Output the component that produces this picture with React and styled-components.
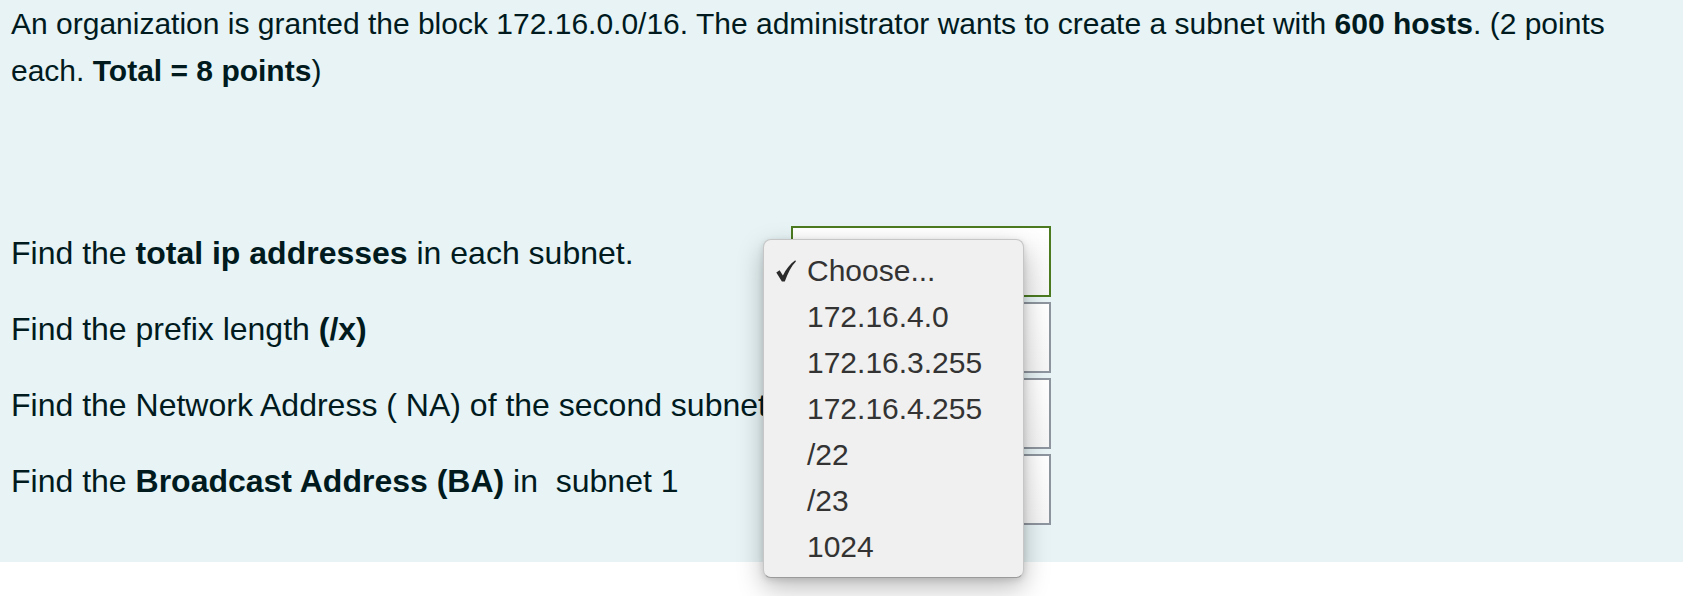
import React from "react";
import styled, { createGlobalStyle } from "styled-components";

const GlobalStyle = createGlobalStyle`
  html, body {
    margin: 0;
    padding: 0;
    background: #ffffff;
  }
  body {
    font-family: "Liberation Sans", Arial, Helvetica, sans-serif;
  }
`;

const questions = [
  {
    id: 1,
    text: (
      <>
        Find the <b>total ip addresses</b> in each subnet.
      </>
    ),
    active: true,
  },
  {
    id: 2,
    text: (
      <>
        Find the prefix length <b>(/x)</b>
      </>
    ),
  },
  {
    id: 3,
    text: <>Find the Network Address ( NA) of the second subnet</>,
  },
  {
    id: 4,
    text: (
      <>
        Find the <b>Broadcast Address (BA)</b> in{"\u00a0"} subnet 1
      </>
    ),
  },
];

const options = [
  "Choose...",
  "172.16.4.0",
  "172.16.3.255",
  "172.16.4.255",
  "/22",
  "/23",
  "1024",
];

function CheckMark() {
  return (
    <svg width="20" height="22" viewBox="0 0 20 22">
      <path
        d="M0.3 12.4 L3.6 10.2 L6.9 15.6 C9.9 9.4 14 3.8 19.3 0.3 L19.9 1.4 C15.4 6 11.8 12.8 8.8 21.5 L5.9 21.5 Z"
        fill="#2b2b2b"
      />
    </svg>
  );
}

function App() {
  return (
    <Page>
      <GlobalStyle />
      <Formulation>
        <QuestionText>
          An organization is granted the block 172.16.0.0/16. The administrator
          wants to create a subnet with <b>600 hosts</b>. (2 points each.{" "}
          <b>Total = 8 points</b>)
        </QuestionText>
        <Answers>
          {questions.map((q) => (
            <React.Fragment key={q.id}>
              <Stem>{q.text}</Stem>
              <SelectCell>
                <SelectBox $active={q.active} />
                {q.active ? (
                  <Menu>
                    {options.map((opt, i) => (
                      <MenuItem key={opt}>
                        <Tick>{i === 0 ? <CheckMark /> : null}</Tick>
                        {opt}
                      </MenuItem>
                    ))}
                  </Menu>
                ) : null}
              </SelectCell>
            </React.Fragment>
          ))}
        </Answers>
      </Formulation>
    </Page>
  );
}

const Page = styled.div`
  min-height: 596px;
  background: #ffffff;
`;

const Formulation = styled.div`
  width: 1683px;
  box-sizing: border-box;
  padding: 0 15px 37px 11px;
  background-color: #e7f3f5;
  color: #001a1e;
`;

const QuestionText = styled.p`
  margin: 0;
  font-size: 30px;
  line-height: 47px;

  b {
    font-weight: 700;
  }
`;

const Answers = styled.div`
  display: grid;
  grid-template-columns: 780px 260px;
  row-gap: 5px;
  margin-top: 132px;
`;

const Stem = styled.div`
  padding-top: 11px;
  font-size: 32px;
  line-height: 32px;
  white-space: nowrap;

  b {
    font-weight: 700;
  }
`;

const SelectCell = styled.div`
  position: relative;
  height: 71px;
`;

const SelectBox = styled.div`
  box-sizing: border-box;
  width: 260px;
  height: 71px;
  background: linear-gradient(#ffffff, #f5f5f5);
  border: 2px solid ${(p) => (p.$active ? "#4b7a21" : "#8f959e")};
`;

const Menu = styled.div`
  position: absolute;
  left: -28px;
  top: 13px;
  z-index: 10;
  box-sizing: border-box;
  width: 261px;
  height: 339px;
  padding: 8px 0 9px;
  background-color: #f0f0f0;
  border: 1px solid #c6c6c6;
  border-bottom-color: #9a9a9a;
  border-radius: 8px;
  box-shadow: 0 10px 26px rgba(0, 0, 0, 0.26), 0 2px 6px rgba(0, 0, 0, 0.12);
  color: #333333;
`;

const MenuItem = styled.div`
  display: flex;
  align-items: center;
  height: 46px;
  font-size: 30px;
`;

const Tick = styled.span`
  display: flex;
  align-items: center;
  justify-content: flex-start;
  width: 31px;
  padding-left: 12px;
  height: 46px;
`;

export default App;
